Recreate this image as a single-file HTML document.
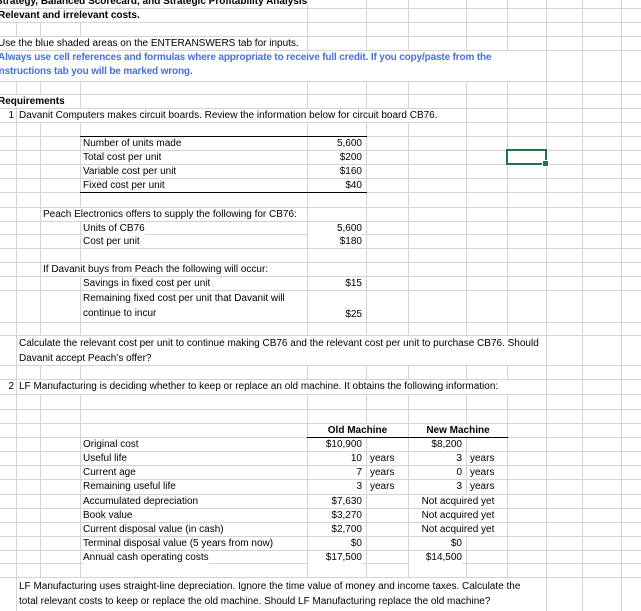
<!DOCTYPE html>
<html><head><meta charset="utf-8"><style>
body{margin:0;width:641px;height:611px;overflow:hidden;background:#fff;position:relative;font-family:"Liberation Sans",Arial,sans-serif;font-size:10px;color:#000}
.h{position:absolute;left:0;width:641px;height:1px;background:#d4d4d4}
.v{position:absolute;top:0;height:611px;width:1px;background:#d4d4d4}
.t{position:absolute;background:#fff;line-height:13px;white-space:nowrap;overflow:hidden}
.r{text-align:right}
.c{text-align:center}
.b{font-weight:bold}
.k{position:absolute;height:1px;background:#000}
</style></head><body>
<div class="h" style="top:8px"></div><div class="h" style="top:22px"></div><div class="h" style="top:36px"></div><div class="h" style="top:50px"></div><div class="h" style="top:81px"></div><div class="h" style="top:94px"></div><div class="h" style="top:108px"></div><div class="h" style="top:122px"></div><div class="h" style="top:136px"></div><div class="h" style="top:150px"></div><div class="h" style="top:164px"></div><div class="h" style="top:178px"></div><div class="h" style="top:192px"></div><div class="h" style="top:207px"></div><div class="h" style="top:221px"></div><div class="h" style="top:234px"></div><div class="h" style="top:248px"></div><div class="h" style="top:262px"></div><div class="h" style="top:276px"></div><div class="h" style="top:290px"></div><div class="h" style="top:322px"></div><div class="h" style="top:335px"></div><div class="h" style="top:365px"></div><div class="h" style="top:379px"></div><div class="h" style="top:394px"></div><div class="h" style="top:409px"></div><div class="h" style="top:423px"></div><div class="h" style="top:437px"></div><div class="h" style="top:451px"></div><div class="h" style="top:465px"></div><div class="h" style="top:479px"></div><div class="h" style="top:494px"></div><div class="h" style="top:508px"></div><div class="h" style="top:522px"></div><div class="h" style="top:536px"></div><div class="h" style="top:550px"></div><div class="h" style="top:563px"></div><div class="h" style="top:577px"></div>
<div class="v" style="left:16px"></div><div class="v" style="left:40px"></div><div class="v" style="left:80px"></div><div class="v" style="left:307px"></div><div class="v" style="left:366px"></div><div class="v" style="left:408px"></div><div class="v" style="left:466px"></div><div class="v" style="left:507px"></div><div class="v" style="left:546px"></div><div class="v" style="left:582px"></div><div class="v" style="left:621px"></div>

<div class="t b" style="left:0;top:-5px;width:307px;height:13px;text-indent:-4px">Strategy, Balanced Scorecard, and Strategic Profitability Analysis</div>
<div class="t b" style="left:0;top:9px;width:300px;height:13px;text-indent:-2px">Relevant and irrelevant costs.</div>
<div class="t" style="left:0;top:37px;width:300px;height:13px;text-indent:-2px">Use the blue shaded areas on the ENTERANSWERS tab for inputs.</div>
<div class="t b" style="left:0;top:51px;width:546px;height:30px;white-space:normal;color:#4a70cf;line-height:14px;text-indent:-2px;letter-spacing:-0.15px"><div style="width:520px">Always use cell references and formulas where appropriate to receive full credit. If you copy/paste from the</div><div style="margin-left:-2px">instructions tab you will be marked wrong.</div></div>
<div class="t b" style="left:0;top:95px;width:78px;height:13px;text-indent:-2px">Requirements</div>
<div class="t r" style="left:0;top:109px;width:14px;height:13px">1</div>
<div class="t" style="left:17px;top:109px;width:449px;height:13px;padding-left:2px;box-sizing:border-box">Davanit Computers makes circuit boards. Review the information below for circuit board CB76.</div>

<div class="t" style="left:83px;top:137px">Number of units made</div><div class="t r" style="left:308px;top:137px;width:54px">5,600</div>
<div class="t" style="left:83px;top:151px">Total cost per unit</div><div class="t r" style="left:308px;top:151px;width:54px">$200</div>
<div class="t" style="left:83px;top:165px">Variable cost per unit</div><div class="t r" style="left:308px;top:165px;width:54px">$160</div>
<div class="t" style="left:83px;top:179px">Fixed cost per unit</div><div class="t r" style="left:308px;top:179px;width:54px">$40</div>
<div class="k" style="left:80px;top:136px;width:287px"></div><div class="k" style="left:80px;top:192px;width:287px"></div>

<div class="t" style="left:41px;top:208px;width:266px;height:13px;padding-left:2px;box-sizing:border-box">Peach Electronics offers to supply the following for CB76:</div>
<div class="t" style="left:83px;top:222px">Units of CB76</div><div class="t r" style="left:308px;top:222px;width:54px">5,600</div>
<div class="t" style="left:83px;top:235px">Cost per unit</div><div class="t r" style="left:308px;top:235px;width:54px">$180</div>
<div class="t" style="left:41px;top:263px;width:266px;height:13px;padding-left:2px;box-sizing:border-box">If Davanit buys from Peach the following will occur:</div>
<div class="t" style="left:83px;top:277px">Savings in fixed cost per unit</div><div class="t r" style="left:308px;top:277px;width:54px">$15</div>
<div class="t" style="left:83px;top:291px;line-height:15px">Remaining fixed cost per unit that Davanit will<br>continue to incur</div><div class="t r" style="left:308px;top:308px;width:54px">$25</div>

<div class="t" style="left:17px;top:336px;width:529px;height:29px;padding-left:2px;box-sizing:border-box;white-space:normal;line-height:15px">Calculate the relevant cost per unit to continue making CB76 and the relevant cost per unit to purchase CB76. Should Davanit accept Peach’s offer?</div>
<div class="t r" style="left:0;top:380px;width:14px;height:14px">2</div>
<div class="t" style="left:17px;top:380px;width:529px;height:14px;padding-left:2px;box-sizing:border-box">LF Manufacturing is deciding whether to keep or replace an old machine. It obtains the following information:</div>

<div class="t b c" style="left:308px;top:424px;width:99px;height:13px">Old Machine</div>
<div class="t b c" style="left:409px;top:424px;width:98px;height:13px">New Machine</div>
<div class="k" style="left:307px;top:437px;width:201px"></div>

<div class="t" style="left:83px;top:438px">Original cost</div><div class="t r" style="left:308px;top:438px;width:54px">$10,900</div><div class="t r" style="left:409px;top:438px;width:53px">$8,200</div>
<div class="t" style="left:83px;top:452px">Useful life</div><div class="t r" style="left:308px;top:452px;width:54px">10</div><div class="t" style="left:370px;top:452px">years</div><div class="t r" style="left:409px;top:452px;width:53px">3</div><div class="t" style="left:470px;top:452px">years</div>
<div class="t" style="left:83px;top:466px">Current age</div><div class="t r" style="left:308px;top:466px;width:54px">7</div><div class="t" style="left:370px;top:466px">years</div><div class="t r" style="left:409px;top:466px;width:53px">0</div><div class="t" style="left:470px;top:466px">years</div>
<div class="t" style="left:83px;top:480px">Remaining useful life</div><div class="t r" style="left:308px;top:480px;width:54px">3</div><div class="t" style="left:370px;top:480px">years</div><div class="t r" style="left:409px;top:480px;width:53px">3</div><div class="t" style="left:470px;top:480px">years</div>
<div class="t" style="left:83px;top:495px">Accumulated depreciation</div><div class="t r" style="left:308px;top:495px;width:54px">$7,630</div><div class="t c" style="left:409px;top:495px;width:98px;height:13px">Not acquired yet</div>
<div class="t" style="left:83px;top:509px">Book value</div><div class="t r" style="left:308px;top:509px;width:54px">$3,270</div><div class="t c" style="left:409px;top:509px;width:98px;height:13px">Not acquired yet</div>
<div class="t" style="left:83px;top:523px">Current disposal value (in cash)</div><div class="t r" style="left:308px;top:523px;width:54px">$2,700</div><div class="t c" style="left:409px;top:523px;width:98px;height:13px">Not acquired yet</div>
<div class="t" style="left:83px;top:537px">Terminal disposal value (5 years from now)</div><div class="t r" style="left:308px;top:537px;width:54px">$0</div><div class="t r" style="left:409px;top:537px;width:53px">$0</div>
<div class="t" style="left:83px;top:551px">Annual cash operating costs</div><div class="t r" style="left:308px;top:551px;width:54px">$17,500</div><div class="t r" style="left:409px;top:551px;width:53px">$14,500</div>

<div class="t" style="left:17px;top:578px;width:529px;height:33px;padding:1px 0 0 2px;box-sizing:border-box;white-space:normal;line-height:15px"><div style="width:515px">LF Manufacturing uses straight-line depreciation. Ignore the time value of money and income taxes. Calculate the total relevant costs to keep or replace the old machine. Should LF Manufacturing replace the old machine?</div></div>

<div style="position:absolute;left:506px;top:149px;width:37px;height:12px;border:2px solid #217346"></div>
<div style="position:absolute;left:542px;top:160px;width:5px;height:5px;background:#217346;border:1px solid #fff"></div>
</body></html>
